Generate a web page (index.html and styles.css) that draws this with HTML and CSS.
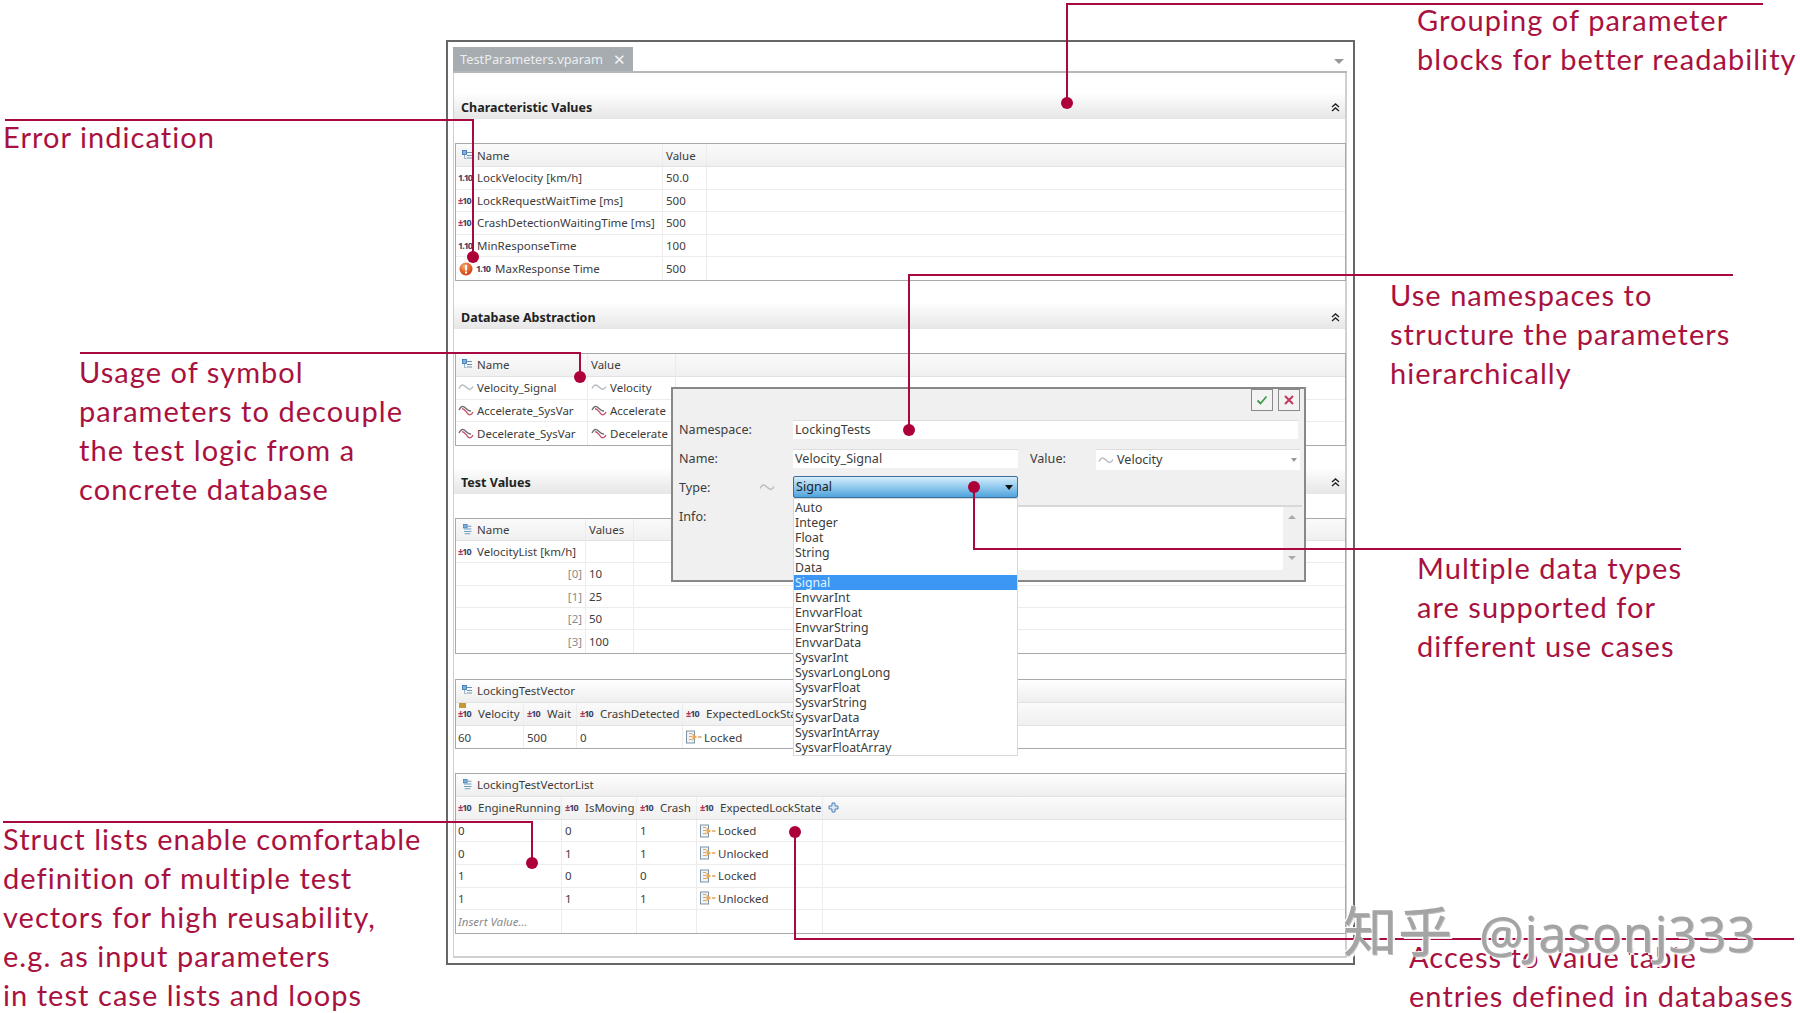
FILE: index.html
```html
<!DOCTYPE html>
<html lang="en">
<head>
<meta charset="utf-8">
<title>Test Parameters</title>
<link rel="stylesheet" href="styles.css">
</head>
<body>
<svg class="defs" aria-hidden="true">
  <defs>
    <radialGradient id="errfill" cx="40%" cy="30%" r="70%"><stop offset="0" stop-color="#f6b27c"/><stop offset=".6" stop-color="#e2622a"/><stop offset="1" stop-color="#c8441a"/></radialGradient>
  </defs>
  <symbol id="tree" viewBox="0 0 11 11">
    <rect x="0.5" y="0.5" width="4" height="4" fill="#7fb0dc" stroke="#2f6fb0" stroke-width=".8"/>
    <path d="M5 2.5h5M5 5.5h5M5 8h5" stroke="#6f93b5" stroke-width="1.2"/>
    <path d="M2.5 4.5v4h2" fill="none" stroke="#7f9fbd" stroke-width=".8"/>
  </symbol>
  <symbol id="tree-tall" viewBox="0 0 11 14">
    <rect x="0.5" y="0.5" width="4.5" height="4.5" fill="#7fb0dc" stroke="#2f6fb0" stroke-width=".8"/>
    <path d="M5 3h5.5M1 6.5h9.5M1 9.5h9.5M2 12.5h7" stroke="#6f9dc0" stroke-width="1.3"/>
  </symbol>
  <symbol id="wave" viewBox="0 0 16 10">
    <path d="M1 6C3 1.5 5 1.5 8 4.5S13 8 15 4" fill="none" stroke="#b9bec2" stroke-width="1.5"/>
  </symbol>
  <symbol id="wave-red" viewBox="0 0 16 11">
    <path d="M1 5C3 .5 5 .5 8 3.5S12 6 13 6" fill="none" stroke="#6d6d72" stroke-width="1.4"/>
    <path d="M4 3.5C7 4 8 7 10 9S14 9 15 7" fill="none" stroke="#c8566e" stroke-width="1.4"/>
  </symbol>
  <symbol id="err" viewBox="0 0 14 14">
    <circle cx="7" cy="7" r="6.5" fill="url(#errfill)"/>
    <rect x="6" y="3" width="2" height="5.5" fill="#fff"/>
    <rect x="6" y="9.5" width="2" height="2" fill="#fff"/>
  </symbol>
  <symbol id="vtable" viewBox="0 0 16 13">
    <rect x="0.5" y="0.5" width="8" height="12" fill="#eef3f7" stroke="#7d93a8"/>
    <path d="M3 3h3M3 6h3M3 9h3" stroke="#e7a25a"/>
    <path d="M6.5 3l4.5 3.5L6.5 10z" fill="#f0a64c"/>
    <path d="M12 6.5h3.5" stroke="#d98a3a" stroke-width="1.2"/>
  </symbol>
  <symbol id="plus" viewBox="0 0 11 11">
    <path d="M4 1h3v3h3v3H7v3H4V7H1V4h3z" fill="#dbe8f6" stroke="#4a7fb8"/>
  </symbol>
  <symbol id="collapse" viewBox="0 0 9 9">
    <path d="M1 4l3.5-3L8 4M1 8l3.5-3L8 8" fill="none" stroke="#222" stroke-width="1.4"/>
  </symbol>
</svg>

<main class="stage">
  <section class="window">
    <div class="tabbar">
      <div class="tab"><span>TestParameters.vparam</span><span class="tab-x">✕</span></div>
      <span class="tab-menu"></span>
    </div>
    <div class="panel">
      <header class="head head-first"><span>Characteristic Values</span><svg class="collapse"><use href="#collapse"/></svg></header>
      <div class="table t1">
        <div class="row hrow"><div class="cell"><svg class="i-tree"><use href="#tree"/></svg>Name</div><div class="cell">Value</div><div class="cell"></div></div>
        <div class="row"><div class="cell"><span class="num">1.10</span>LockVelocity [km/h]</div><div class="cell">50.0</div><div class="cell"></div></div>
        <div class="row"><div class="cell"><span class="num"><b>±</b>10</span>LockRequestWaitTime [ms]</div><div class="cell">500</div><div class="cell"></div></div>
        <div class="row"><div class="cell"><span class="num"><b>±</b>10</span>CrashDetectionWaitingTime [ms]</div><div class="cell">500</div><div class="cell"></div></div>
        <div class="row"><div class="cell"><span class="num">1.10</span>MinResponseTime</div><div class="cell">100</div><div class="cell"></div></div>
        <div class="row"><div class="cell"><svg class="i-err"><use href="#err"/></svg><span class="num num-err">1.10</span>MaxResponse Time</div><div class="cell">500</div><div class="cell"></div></div>
      </div>

      <header class="head"><span>Database Abstraction</span><svg class="collapse"><use href="#collapse"/></svg></header>
      <div class="table t2">
        <div class="row hrow"><div class="cell"><svg class="i-tree"><use href="#tree"/></svg>Name</div><div class="cell">Value</div><div class="cell"></div></div>
        <div class="row"><div class="cell"><svg class="i-wave"><use href="#wave"/></svg>Velocity_Signal</div><div class="cell"><svg class="i-wave"><use href="#wave"/></svg>Velocity</div><div class="cell"></div></div>
        <div class="row"><div class="cell"><svg class="i-wave"><use href="#wave-red"/></svg>Accelerate_SysVar</div><div class="cell"><svg class="i-wave"><use href="#wave-red"/></svg>Accelerate</div><div class="cell"></div></div>
        <div class="row"><div class="cell"><svg class="i-wave"><use href="#wave-red"/></svg>Decelerate_SysVar</div><div class="cell"><svg class="i-wave"><use href="#wave-red"/></svg>Decelerate</div><div class="cell"></div></div>
      </div>

      <header class="head"><span>Test Values</span><svg class="collapse"><use href="#collapse"/></svg></header>
      <div class="table t3">
        <div class="row hrow"><div class="cell"><svg class="i-tree"><use href="#tree-tall"/></svg>Name</div><div class="cell">Values</div><div class="cell"></div></div>
        <div class="row"><div class="cell"><span class="num"><b>±</b>10</span>VelocityList [km/h]</div><div class="cell"></div><div class="cell"></div></div>
        <div class="row"><div class="cell idx">[0]</div><div class="cell">10</div><div class="cell"></div></div>
        <div class="row"><div class="cell idx">[1]</div><div class="cell">25</div><div class="cell"></div></div>
        <div class="row"><div class="cell idx">[2]</div><div class="cell">50</div><div class="cell"></div></div>
        <div class="row"><div class="cell idx">[3]</div><div class="cell">100</div><div class="cell"></div></div>
      </div>

      <div class="table t4">
        <div class="row hrow title"><div class="cell"><svg class="i-tree"><use href="#tree"/></svg>LockingTestVector</div></div>
        <div class="row hrow"><div class="cell"><span class="num num-head gold"><b>±</b>10</span>Velocity</div><div class="cell"><span class="num num-head"><b>±</b>10</span>Wait</div><div class="cell"><span class="num num-head"><b>±</b>10</span>CrashDetected</div><div class="cell"><span class="num num-head"><b>±</b>10</span>ExpectedLockState</div><div class="cell"></div></div>
        <div class="row"><div class="cell">60</div><div class="cell">500</div><div class="cell">0</div><div class="cell cell-sym"><svg class="i-vt"><use href="#vtable"/></svg>Locked</div><div class="cell"></div></div>
      </div>

      <div class="table t5">
        <div class="row hrow title"><div class="cell"><svg class="i-tree"><use href="#tree-tall"/></svg>LockingTestVectorList</div></div>
        <div class="row hrow"><div class="cell"><span class="num num-head"><b>±</b>10</span>EngineRunning</div><div class="cell"><span class="num num-head"><b>±</b>10</span>IsMoving</div><div class="cell"><span class="num num-head"><b>±</b>10</span>Crash</div><div class="cell"><span class="num num-head"><b>±</b>10</span>ExpectedLockState</div><div class="cell"><svg class="i-plus"><use href="#plus"/></svg></div></div>
        <div class="row"><div class="cell">0</div><div class="cell">0</div><div class="cell">1</div><div class="cell cell-sym"><svg class="i-vt"><use href="#vtable"/></svg>Locked</div><div class="cell"></div></div>
        <div class="row"><div class="cell">0</div><div class="cell">1</div><div class="cell">1</div><div class="cell cell-sym"><svg class="i-vt"><use href="#vtable"/></svg>Unlocked</div><div class="cell"></div></div>
        <div class="row"><div class="cell">1</div><div class="cell">0</div><div class="cell">0</div><div class="cell cell-sym"><svg class="i-vt"><use href="#vtable"/></svg>Locked</div><div class="cell"></div></div>
        <div class="row"><div class="cell">1</div><div class="cell">1</div><div class="cell">1</div><div class="cell cell-sym"><svg class="i-vt"><use href="#vtable"/></svg>Unlocked</div><div class="cell"></div></div>
        <div class="row"><div class="cell insert">Insert Value...</div><div class="cell"></div><div class="cell"></div><div class="cell"></div><div class="cell"></div></div>
      </div>
    </div>

    <div class="dialog">
      <div class="dlg-actions">
        <button class="dlg-btn"><svg viewBox="0 0 12 12"><path d="M1.5 6.5l3 3 6-7" fill="none" stroke="#3f9a4a" stroke-width="1.8"/></svg></button>
        <button class="dlg-btn"><svg viewBox="0 0 12 12"><path d="M2 2l8 8M10 2l-8 8" fill="none" stroke="#c23a5c" stroke-width="2"/></svg></button>
      </div>
      <div class="dlg-row dlg-ns"><label class="dlg-label">Namespace:</label><div class="input input-full">LockingTests</div></div>
      <div class="dlg-row dlg-name"><label class="dlg-label">Name:</label><div class="input input-name">Velocity_Signal</div><label class="dlg-label-value">Value:</label><div class="input value-combo"><svg class="i-wave"><use href="#wave"/></svg>Velocity<span class="caret caret-grey"></span></div></div>
      <div class="dlg-row dlg-type"><label class="dlg-label type-label">Type:<svg class="i-wave type-wave"><use href="#wave"/></svg></label>
        <div class="combo">Signal<span class="caret"></span>
          <ul class="droplist">
            <li>Auto</li><li>Integer</li><li>Float</li><li>String</li><li>Data</li><li class="sel">Signal</li><li>EnvvarInt</li><li>EnvvarFloat</li><li>EnvvarString</li><li>EnvvarData</li><li>SysvarInt</li><li>SysvarLongLong</li><li>SysvarFloat</li><li>SysvarString</li><li>SysvarData</li><li>SysvarIntArray</li><li>SysvarFloatArray</li>
          </ul>
        </div>
      </div>
      <div class="dlg-row dlg-info"><label class="dlg-label">Info:</label><div class="textarea"><div class="scroll"><span class="sb-up"></span><span class="sb-down"></span></div></div></div>
    </div>
  </section>

  <div class="lead l-group"></div>
  <div class="lead l-error"></div>
  <div class="lead l-usage"></div>
  <div class="lead l-ns"></div>
  <div class="lead l-types"></div>
  <div class="lead l-struct"></div>
  <div class="lead l-access"></div>

  <p class="note n-group">Grouping of parameter<br>blocks for better readability</p>
  <p class="note n-error">Error indication</p>
  <p class="note n-usage">Usage of symbol<br>parameters to decouple<br>the test logic from a<br>concrete database</p>
  <p class="note n-ns">Use namespaces to<br>structure the parameters<br>hierarchically</p>
  <p class="note n-types">Multiple data types<br>are supported for<br>different use cases</p>
  <p class="note n-struct">Struct lists enable comfortable<br>definition of multiple test<br>vectors for high reusability,<br>e.g. as input parameters<br>in test case lists and loops</p>
  <p class="note n-access">Access to value table<br>entries defined in databases</p>

  <div class="watermark"><span class="wm-cjk">知乎</span> @jasonj333</div>
</main>
</body>
</html>
```

FILE: styles.css
```css
* { box-sizing: border-box; }
html, body { margin: 0; padding: 0; background: #fff; }
body { font-family: "Noto Sans", "Open Sans", sans-serif; font-size: 11.5px; color: #3c3c3c; overflow: hidden; }
.defs { position: absolute; width: 0; height: 0; }
.stage { position: relative; width: 1800px; height: 1013px; overflow: hidden; background: #fff; }

/* window */
.window { position: absolute; left: 446px; top: 40px; width: 909px; height: 925px; border: 2px solid #666; padding: 5px 6px 5px 5px; display: flex; flex-direction: column; background: #fff; }
.tabbar { height: 26px; flex: none; display: flex; justify-content: space-between; border-bottom: 2px solid #b4b8bb; }
.tab { width: 180px; height: 24px; background: #a6acb0; color: #eceeef; font-size: 12.8px; display: flex; align-items: center; padding: 0 7px; justify-content: space-between; }
.tab-x { font-size: 15px; color: #f4f4f4; }
.tab-menu { width: 0; height: 0; border-left: 5px solid transparent; border-right: 5px solid transparent; border-top: 5px solid #999; margin: 12px 3px 0 0; }
.panel { flex: 1; border-left: 1px solid #d0d0d0; border-right: 2px solid #d0d0d0; border-bottom: 2px solid #d0d0d0; padding-top: 19px; }

.head { height: 27px; margin-bottom: 24px; margin-top: 21px; padding: 4px 5px 0 7px; display: flex; align-items: center; justify-content: space-between; background: linear-gradient(#fff, #e6e6e6); font-weight: 700; font-size: 12.5px; color: #222; }
.head-first { margin-top: 0; }
.collapse { width: 9px; height: 9px; }

/* tables */
.table { margin-left: 1px; width: 891px; border: 1px solid #a9a9a9; background: #fff; }
.t4 { margin-top: 25px; }
.t5 { margin-top: 23.5px; }
.row { display: grid; height: 22.6px; border-bottom: 1px solid #ececec; }
.row:last-child { border-bottom: 0; }
.hrow { height: 23px; background: linear-gradient(#fafafa, #f0f0f0); border-bottom: 1px solid #e2e2e2; }
.t3 .row { height: 22.4px; }
.t3 .hrow { height: 22px; }
.title { background: linear-gradient(#fff, #eeeeee); }
.cell { display: flex; align-items: center; padding: 0 3px; white-space: nowrap; overflow: hidden; border-right: 1px solid #ececec; min-width: 0; }
.cell:first-child { padding-left: 2px; }
.cell:last-child { border-right: 0; }
.t1 .row { grid-template-columns: 207px 44px 1fr; }
.t2 .row { grid-template-columns: 132px 88px 1fr; }
.t3 .row { grid-template-columns: 130px 48px 1fr; }
.t4 .row { grid-template-columns: 68px 53px 106px 140px 1fr; }
.t5 .row { grid-template-columns: 106px 75px 60px 126px 1fr; }
.t4 .title, .t5 .title { grid-template-columns: 1fr; }
.num { width: 18px; flex: none; font-size: 9px; font-weight: 700; letter-spacing: -1px; color: #3a3f6a; margin-right: 1px; }
.num b { color: #a83a5a; }
.num-err { width: 16px; margin-left: 3px; margin-right: 3px; }
.num-head { margin-right: 2px; }
.gold { position: relative; }
.gold::before { content: ""; position: absolute; left: 1px; top: -4px; width: 7px; height: 5px; background: #c79636; }
.i-tree { width: 11px; height: 11px; margin: 0 4px; flex: none; }
.i-err { width: 14px; height: 14px; flex: none; margin-left: 1px; }
.i-wave { width: 16px; height: 11px; flex: none; margin-right: 3px; }
.i-vt { width: 16px; height: 14px; flex: none; margin-right: 2px; }
.i-plus { width: 11px; height: 11px; margin-left: 2px; }
.idx { justify-content: flex-end; color: #8c8c8c; }
.insert { font-style: italic; color: #8a8a8a; }

/* dialog */
.dialog { position: absolute; left: 223px; top: 345px; width: 635px; height: 195px; background: #f0f0f0; border: 2px solid #888; padding: 0 4px 0 6px; z-index: 2; font-size: 12.6px; }
.dlg-actions { display: flex; justify-content: flex-end; gap: 5px; height: 22px; }
.dlg-btn { width: 22px; height: 22px; padding: 4px; border: 1px solid #8a8a8a; background: #f3f3f3; }
.dlg-btn svg { display: block; width: 12px; height: 12px; }
.dlg-row { display: flex; align-items: center; }
.dlg-label { width: 114px; flex: none; }
.dlg-ns { height: 19px; margin-top: 9px; }
.dlg-name { height: 21px; margin-top: 10px; align-items: flex-start; }
.dlg-name .dlg-label { line-height: 19px; }
.dlg-type { height: 22px; margin-top: 6px; }
.dlg-info { height: 65px; margin-top: 7px; align-items: flex-start; }
.dlg-info .dlg-label { margin-top: 3px; }
.input { background: #fff; border-top: 1px solid #ddd; padding: 0 2px; height: 19px; line-height: 18px; }
.input-full { flex: 1; margin-right: 2px; }
.input-name { width: 225px; }
.dlg-label-value { width: 66px; margin-left: 12px; line-height: 19px; }
.value-combo { width: 204px; height: 21px; display: flex; align-items: center; position: relative; padding-left: 2px; }
.type-label { display: flex; align-items: center; justify-content: space-between; padding-right: 18px; }
.type-wave { margin: 0; }
.combo { position: relative; width: 225px; height: 22px; line-height: 20px; padding: 0 2px; border: 1px solid #3a6f9e; border-radius: 2px; background: linear-gradient(#d6ecfb 0%, #98cdef 45%, #4fa3dd 100%); color: #222; }
.caret { position: absolute; right: 4px; top: 8px; width: 0; height: 0; border-left: 4px solid transparent; border-right: 4px solid transparent; border-top: 5px solid #111; }
.caret-grey { border-top-color: #999; top: 8px; right: 3px; border-left-width: 3.5px; border-right-width: 3.5px; border-top-width: 4px; }
.droplist { position: absolute; left: -1px; top: 21px; width: 225px; height: 258px; margin: 0; padding: 1px 0 0; list-style: none; background: #fff; border: 1px solid #d8d8d8; z-index: 3; font-size: 12.3px; }
.droplist li { height: 15px; line-height: 15px; padding-left: 1px; color: #3c3c3c; }
.droplist .sel { background: #3b97f3; color: #e6f2ff; }
.textarea { position: relative; flex: 1; height: 65px; margin-right: -2px; background: #fff; border-top: 2px solid #d8d8d8; }
.scroll { position: absolute; right: 0; top: 0; bottom: 0; width: 19px; background: #f0f0f0; }
.sb-up, .sb-down { position: absolute; left: 5px; width: 0; height: 0; border-left: 4px solid transparent; border-right: 4px solid transparent; }
.sb-up { top: 8px; border-bottom: 4px solid #aaa; }
.sb-down { bottom: 10px; border-top: 4px solid #aaa; }

/* leader lines */
.lead { position: absolute; border: 0 solid #a80a40; z-index: 4; }
.lead::after { content: ""; position: absolute; width: 12px; height: 12px; border-radius: 50%; background: #ad0039; }
.l-group { left: 1066px; top: 3px; width: 697px; height: 100px; border-top-width: 2px; border-left-width: 2px; }
.l-group::after { left: -7px; bottom: -6px; }
.l-error { left: 5px; top: 119px; width: 469px; height: 138px; border-top-width: 2px; border-right-width: 2px; }
.l-error::after { right: -7px; bottom: -6px; }
.l-usage { left: 80px; top: 352px; width: 501px; height: 25px; border-top-width: 2px; border-right-width: 2px; }
.l-usage::after { right: -7px; bottom: -6px; }
.l-ns { left: 908px; top: 274px; width: 825px; height: 156px; border-top-width: 2px; border-left-width: 2px; }
.l-ns::after { left: -7px; bottom: -6px; }
.l-types { left: 973px; top: 487px; width: 708px; height: 63px; border-left-width: 2px; border-bottom-width: 2px; }
.l-types::after { left: -7px; top: -6px; }
.l-struct { left: 3px; top: 821px; width: 530px; height: 42px; border-top-width: 2px; border-right-width: 2px; }
.l-struct::after { right: -7px; bottom: -6px; }
.l-access { left: 794px; top: 832px; width: 1000px; height: 108px; border-left-width: 2px; border-bottom-width: 2px; }
.l-access::after { left: -7px; top: -6px; }

/* annotations */
.note { position: absolute; margin: 0; font-family: Lato, "Noto Sans", sans-serif; font-size: 29px; line-height: 39px; letter-spacing: 1.05px; color: #a9123f; white-space: nowrap; z-index: 5; }
.n-group { left: 1417px; top: 0; }
.n-error { left: 3px; top: 117px; }
.n-usage { left: 79px; top: 352px; }
.n-ns { left: 1390px; top: 275px; }
.n-types { left: 1417px; top: 548px; }
.n-struct { left: 3px; top: 819px; }
.n-access { left: 1409px; top: 937px; }

/* watermark */
.watermark { position: absolute; left: 1343px; top: 894px; font-family: "Noto Sans", sans-serif; font-size: 49.6px; line-height: 70px; letter-spacing: 1px; color: #a4a4a4; white-space: nowrap; text-shadow: 1px 1px 0 #bbb, 3px 3px 0 rgba(255,255,255,.9), -1px -1px 0 rgba(255,255,255,.9); z-index: 6; }
.wm-cjk { font-family: "Noto Sans CJK SC", sans-serif; font-size: 54px; margin-right: 12px; }
```
